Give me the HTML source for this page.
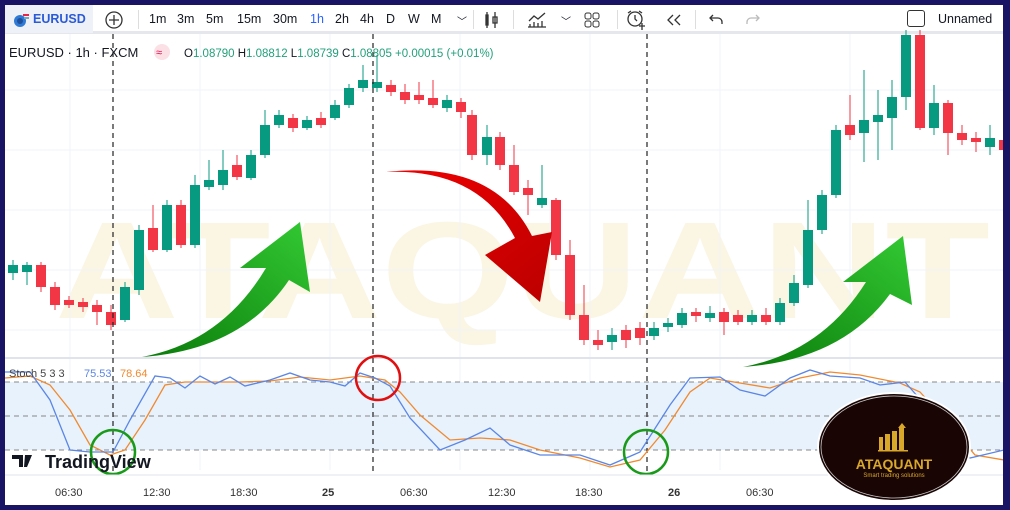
<!DOCTYPE html>
<html><head><meta charset="utf-8"><style>
*{margin:0;padding:0;box-sizing:border-box}
body{width:1010px;height:510px;background:#1a1464;overflow:hidden;font-family:"Liberation Sans",sans-serif;position:relative}
#w{position:absolute;left:5px;top:5px;width:998px;height:500px;background:#fff;overflow:hidden}
.tb{position:absolute;left:0;top:0;width:999px;height:29px;background:#fff;border-bottom:3px solid #e6e7ec;font-size:12.5px;color:#131722}
.tb span{position:absolute;top:7px}
</style></head><body>
<div id="w">
<div class="tb">
<div style="position:absolute;left:0;top:0;width:88px;height:28px;background:#eef1f8"></div>
<svg style="position:absolute;left:8px;top:7px" width="16" height="16"><circle cx="7" cy="9" r="6" fill="#2f7ad6"/><circle cx="7" cy="9" r="3" fill="#1d4f9a"/><rect x="10" y="2" width="6" height="2" fill="#e24"/><rect x="11" y="5" width="5" height="2" fill="#7ab"/></svg>
<span style="left:28px;font-weight:bold;color:#2a5ad6">EURUSD</span>
<svg style="position:absolute;left:99px;top:5px" width="20" height="20"><circle cx="10" cy="10" r="8" fill="none" stroke="#333" stroke-width="1.3"/><path d="M10 5v10M5 10h10" stroke="#333" stroke-width="1.3"/></svg>
<div style="position:absolute;left:133px;top:5px;width:1px;height:19px;background:#ddd"></div>
<span style="left:144px">1m</span><span style="left:172px">3m</span><span style="left:201px">5m</span><span style="left:232px">15m</span><span style="left:268px">30m</span><span style="left:305px;color:#2962ff">1h</span><span style="left:330px">2h</span><span style="left:355px">4h</span><span style="left:381px">D</span><span style="left:403px">W</span><span style="left:426px">M</span><span style="left:452px;font-size:10px;top:8px">﹀</span>
<div style="position:absolute;left:468px;top:5px;width:1px;height:19px;background:#ddd"></div>
<svg style="position:absolute;left:478px;top:5px" width="16" height="20"><path d="M4 2v16M3 5h2v10H3zM12 2v16M10 7h4v6h-4z" stroke="#333" fill="none" stroke-width="1.3"/></svg>
<div style="position:absolute;left:508px;top:5px;width:1px;height:19px;background:#ddd"></div>
<svg style="position:absolute;left:522px;top:6px" width="20" height="18"><path d="M2 10l5-5 4 3 7-6M3 16v-3M7 16v-5M11 16v-4M15 16v-6M1 16h18" stroke="#333" fill="none" stroke-width="1.3"/></svg>
<span style="left:556px;font-size:10px;top:8px">﹀</span>
<svg style="position:absolute;left:578px;top:6px" width="18" height="18"><rect x="2" y="2" width="6" height="6" rx="2" fill="none" stroke="#333"/><rect x="10" y="2" width="6" height="6" rx="2" fill="none" stroke="#333"/><rect x="2" y="10" width="6" height="6" rx="2" fill="none" stroke="#333"/><rect x="10" y="10" width="6" height="6" rx="2" fill="none" stroke="#333"/></svg>
<div style="position:absolute;left:612px;top:5px;width:1px;height:19px;background:#ddd"></div>
<svg style="position:absolute;left:620px;top:4px" width="22" height="22"><circle cx="10" cy="10" r="7" fill="none" stroke="#333" stroke-width="1.3"/><path d="M10 6v4l2 2M3 4l3-2M17 4l-3-2M17 14v7M14 17h6" stroke="#333" fill="none" stroke-width="1.3"/></svg>
<svg style="position:absolute;left:661px;top:8px" width="16" height="14"><path d="M7 2L2 7l5 5M14 2L9 7l5 5" stroke="#333" fill="none" stroke-width="1.3"/></svg>
<div style="position:absolute;left:690px;top:5px;width:1px;height:19px;background:#ddd"></div>
<svg style="position:absolute;left:703px;top:8px" width="16" height="12"><path d="M5 2L2 5l3 3M2 5h8a4 4 0 0 1 4 4v2" stroke="#333" fill="none" stroke-width="1.3"/></svg>
<svg style="position:absolute;left:740px;top:8px" width="16" height="12"><path d="M11 2l3 3-3 3M14 5H6a4 4 0 0 0-4 4v2" stroke="#bbb" fill="none" stroke-width="1.3"/></svg>
<div style="position:absolute;left:902px;top:5px;width:18px;height:17px;border:1.5px solid #333;border-radius:3px"></div>
<span style="left:933px">Unnamed</span>
</div>
<svg style="position:absolute;left:0;top:0" width="999" height="500" viewBox="5 5 999 500">
<text x="55" y="318" font-family="Liberation Sans" font-weight="bold" font-size="138" fill="#fbf5e4" textLength="935" lengthAdjust="spacingAndGlyphs">ATAQUANT</text>
<g stroke="#f0f3fa" stroke-width="1">
<path d="M5 90H1004M5 150H1004M5 210H1004M5 270H1004M5 330H1004M70 34V470M200 34V470M330 34V470M460 34V470M590 34V470M720 34V470M850 34V470"/>
</g>
<line x1="5" y1="358" x2="1004" y2="358" stroke="#e0e3eb" stroke-width="2"/>
<rect x="5" y="382" width="999" height="68" fill="#e8f2fc"/>
<g stroke="#888" stroke-dasharray="5,4" stroke-width="1"><path d="M5 382H1004M5 416H1004M5 450H1004"/></g>
<g id="c"></g>
<g stroke="#222" stroke-dasharray="5,4" stroke-width="1.2"><path d="M113 34V475M373 34V475M647 34V475"/></g>
<polyline fill="none" stroke="#f08a30" stroke-width="1.3" points="5,378 30,376 50,385 70,410 90,445 110,455 125,450 145,420 165,385 185,382 210,382 240,382 270,381 300,377 330,380 360,376 385,380 400,392 420,415 450,440 480,438 510,440 540,450 580,458 610,467 640,460 665,430 690,392 710,378 740,383 770,388 800,378 830,372 860,375 900,383 920,392 950,425 975,455 1004,460"/>
<polyline fill="none" stroke="#5b86e5" stroke-width="1.3" points="5,372 30,372 50,400 70,450 90,452 113,452 130,420 155,376 170,378 185,388 200,376 215,384 230,377 245,386 270,380 290,373 310,380 330,382 345,386 360,373 375,378 390,386 410,418 440,450 465,440 490,428 510,445 540,455 580,455 610,465 640,452 670,405 690,378 720,377 740,390 765,396 790,378 810,370 830,376 860,378 880,385 905,382 925,405 945,440 970,458 1004,450"/>
<circle cx="113" cy="452" r="22" fill="none" stroke="#1a9a1a" stroke-width="2.5"/>
<circle cx="378" cy="378" r="22" fill="none" stroke="#e01010" stroke-width="2.5"/>
<circle cx="646" cy="452" r="22" fill="none" stroke="#1a9a1a" stroke-width="2.5"/>
<defs><linearGradient id="g" x1="0" y1="1" x2="1" y2="0"><stop offset="0" stop-color="#0a7a0a"/><stop offset="1" stop-color="#33c933"/></linearGradient>
<linearGradient id="r" x1="0" y1="0" x2="1" y2="1"><stop offset="0" stop-color="#e00"/><stop offset="1" stop-color="#b00"/></linearGradient></defs>
<path d="M142 357Q222 342 266 268L240 268L300 222L310 292L289 280Q242 350 142 357Z" fill="url(#g)"/>
<path d="M743 367Q822 352 866 282L843 282L903 236L912 305L890 294Q842 360 743 367Z" fill="url(#g)"/>
<path d="M386 172Q478 168 515 238L485 255L540 302L552 232L532 236Q494 160 386 172Z" fill="url(#r)"/>
<text x="9" y="57" font-size="13" fill="#131722">EURUSD · 1h · FXCM</text>
<circle cx="162" cy="52" r="8" fill="#fbe0e6"/><text x="156" y="56" font-size="11" fill="#e04">≈</text>
<text x="184" y="57" font-size="11.5" fill="#22a07a"><tspan fill="#131722">O</tspan>1.08790 <tspan fill="#131722">H</tspan>1.08812 <tspan fill="#131722">L</tspan>1.08739 <tspan fill="#131722">C</tspan>1.08805 +0.00015 (+0.01%)</text>
<text x="9" y="377" font-size="11" fill="#444">Stoch 5 3 3</text>
<text x="84" y="377" font-size="11" fill="#5b86e5">75.53</text>
<text x="120" y="377" font-size="11" fill="#f08a30">78.64</text>
<path d="M12 455h11v12h-4v-8h-7zM25 455h7l-5 12h-3z" fill="#131722"/>
<text x="45" y="468" font-size="18" font-weight="bold" fill="#131722">TradingView</text>
<line x1="5" y1="475" x2="1004" y2="475" stroke="#e0e3eb"/>
<g font-size="11" fill="#333"><text x="55" y="496">06:30</text><text x="143" y="496">12:30</text><text x="230" y="496">18:30</text><text x="322" y="496" font-weight="bold">25</text><text x="400" y="496">06:30</text><text x="488" y="496">12:30</text><text x="575" y="496">18:30</text><text x="668" y="496" font-weight="bold">26</text><text x="746" y="496">06:30</text></g>
<ellipse cx="894" cy="447" rx="76" ry="54" fill="#1a0505" stroke="#fff" stroke-width="2"/>
<ellipse cx="894" cy="447" rx="73" ry="51" fill="none" stroke="#ccc" stroke-width="0.8"/>
<g fill="#d9a72a"><rect x="879" y="437" width="4" height="13"/><rect x="885" y="434" width="5" height="16"/><rect x="892" y="431" width="5" height="19"/><rect x="899" y="428" width="5" height="22"/><path d="M898 428l4-5 4 5z"/><rect x="878" y="450" width="30" height="1.5"/></g>
<text x="894" y="469" text-anchor="middle" font-size="14" font-weight="bold" fill="#d9a72a">ATAQUANT</text>
<text x="894" y="477" text-anchor="middle" font-size="6" fill="#d9a72a">Smart trading solutions</text>
</svg>
</div>
<script>
var d=[[13,'g',265,273,260,280],[27,'g',265,272,262,285],[41,'r',265,287,262,292],[55,'r',287,305,282,310],[69,'r',300,305,296,308],[83,'r',302,307,298,312],[97,'r',305,312,300,325],[111,'r',312,325,305,330],[125,'g',287,320,282,322],[139,'g',230,290,225,295],[153,'r',228,250,205,252],[167,'g',205,250,200,252],[181,'r',205,245,200,248],[195,'g',185,245,175,248],[209,'g',180,187,160,190],[223,'g',170,185,150,190],[237,'r',165,177,155,180],[251,'g',155,178,150,180],[265,'g',125,155,110,158],[279,'g',115,125,110,128],[293,'r',118,128,114,132],[307,'g',120,128,116,130],[321,'r',118,125,112,128],[335,'g',105,118,100,120],[349,'g',88,105,84,108],[363,'g',80,88,65,92],[377,'g',82,88,55,92],[391,'r',85,92,80,96],[405,'r',92,100,84,104],[419,'r',95,100,82,104],[433,'r',98,105,80,108],[447,'g',100,108,95,112],[461,'r',102,112,98,118],[472,'r',115,155,110,160],[487,'g',137,155,125,165],[500,'r',137,165,132,170],[514,'r',165,192,145,195],[528,'r',188,195,180,215],[542,'g',198,205,165,208],[556,'r',200,255,198,260],[570,'r',255,315,240,320],[584,'r',315,340,285,345],[598,'r',340,345,330,350],[612,'g',335,342,328,350],[626,'r',330,340,325,348],[640,'r',328,338,322,345],[654,'g',328,336,322,340],[668,'g',323,327,318,332],[682,'g',313,325,308,328],[696,'r',312,316,308,322],[710,'g',313,318,306,322],[724,'r',312,322,308,335],[738,'r',315,322,310,325],[752,'g',315,322,310,325],[766,'r',315,322,308,325],[780,'g',303,322,298,325],[794,'g',283,303,275,306],[808,'g',230,285,200,288],[822,'g',195,230,190,234],[836,'g',130,195,125,198],[850,'r',125,135,95,140],[864,'g',120,133,70,162],[878,'g',115,122,90,160],[892,'g',97,118,80,150],[906,'g',35,97,30,110],[920,'r',35,128,30,130],[934,'g',103,128,85,135],[948,'r',103,133,100,155],[962,'r',133,140,125,145],[976,'r',138,142,132,152],[990,'g',138,147,125,155],[1004,'r',140,150,135,155]];
var s='';d.forEach(function(c){var col=c[1]=='g'?'#089981':'#f23645';s+='<line x1="'+c[0]+'" x2="'+c[0]+'" y1="'+c[4]+'" y2="'+c[5]+'" stroke="'+col+'"/><rect x="'+(c[0]-5)+'" y="'+c[2]+'" width="10" height="'+Math.max(2,c[3]-c[2])+'" fill="'+col+'"/>';});
document.getElementById('c').innerHTML=s;
</script>
</body></html>
